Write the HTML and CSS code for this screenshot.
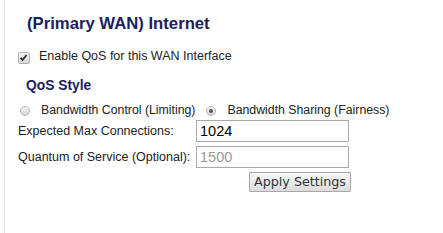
FILE: index.html
```html
<!DOCTYPE html>
<html>
<head>
<meta charset="utf-8">
<link rel="stylesheet" href="styles.css">
</head>
<body>
<div class="panel">
  <h2 class="title">(Primary WAN) Internet</h2>
  <div class="check-row">
    <span class="checkbox"><svg viewBox="0 0 11 11" width="11" height="11"><path d="M2.5 5.8 L4.6 7.9 L8.6 3" fill="none" stroke="#333" stroke-width="1.8"/></svg></span>
    <span class="lbl">Enable QoS for this WAN Interface</span>
  </div>
  <h3 class="subtitle">QoS Style</h3>
  <div class="radio-row">
    <span class="radio"></span>
    <span class="lbl">Bandwidth Control (Limiting)</span>
    <span class="radio checked"></span>
    <span class="lbl">Bandwidth Sharing (Fairness)</span>
  </div>
  <div class="form">
    <label class="flabel">Expected Max Connections:</label>
    <input class="finput" type="text" value="1024">
    <label class="flabel">Quantum of Service (Optional):</label>
    <input class="finput" type="text" placeholder="1500">
    <button class="btn">Apply Settings</button>
  </div>
</div>
</body>
</html>
```
FILE: styles.css
```css
html, body {
  margin: 0;
  padding: 0;
  background: #fff;
}
body {
  font-family: "Liberation Sans", Arial, sans-serif;
  color: #222;
  width: 443px;
  height: 233px;
  overflow: hidden;
}
.panel {
  margin-left: 4px;
  border-left: 1px solid #e2e2e2;
  height: 233px;
  padding-left: 13px;
  box-sizing: border-box;
}
.title {
  margin: 0 0 0 9px;
  padding-top: 14px;
  font-size: 16.7px;
  line-height: 20px;
  font-weight: bold;
  color: #1b215e;
}
.check-row {
  margin-top: 14px;
  display: flex;
  align-items: center;
  height: 16px;
  font-size: 12.5px;
  line-height: 16px;
}
.checkbox {
  width: 10px;
  height: 10px;
  border: 1px solid #b4b4b4;
  border-radius: 2px;
  background: linear-gradient(#f2f2f2, #d8d8d8);
  margin-right: 9px;
  margin-top: 3px;
  position: relative;
}
.checkbox svg {
  position: absolute;
  left: -1px;
  top: -1px;
}
.subtitle {
  margin: 13px 0 0 8px;
  font-size: 13.8px;
  line-height: 17px;
  font-weight: bold;
  color: #1b215e;
}
.radio-row {
  margin-top: 8px;
  display: flex;
  align-items: center;
  height: 16px;
  font-size: 12.3px;
  line-height: 16px;
  padding-left: 2px;
}
.radio {
  width: 8px;
  height: 8px;
  border: 1px solid #b8b8b8;
  border-radius: 50%;
  background: linear-gradient(#f4f4f4, #d6d6d6);
  margin-right: 11px;
  margin-top: 2px;
  position: relative;
}
.radio.checked::after {
  content: "";
  position: absolute;
  left: 2px;
  top: 2px;
  width: 4px;
  height: 4px;
  border-radius: 50%;
  background: #555;
}
.radio-row .lbl:nth-of-type(2) {
  margin-right: 11px;
}
.form {
  margin-top: 2px;
  display: grid;
  grid-template-columns: 178px 155px;
  row-gap: 4px;
  width: 333px;
}
.flabel {
  font-size: 12.5px;
  line-height: 22px;
  height: 22px;
  white-space: nowrap;
}
.finput {
  width: 153px;
  height: 22px;
  box-sizing: border-box;
  border: 1px solid #a9a9a9;
  padding: 0 3px;
  margin: 0;
  font-family: "Liberation Sans", Arial, sans-serif;
  font-size: 14.5px;
  color: #000;
  background: #fff;
  outline: none;
}
.finput::placeholder {
  color: #9a9a9a;
}
.btn {
  grid-column: 2;
  justify-self: end;
  width: 102px;
  height: 20px;
  margin: 0;
  padding: 0;
  border: 1px solid #a8a8a8;
  border-radius: 1px;
  background: linear-gradient(#f8f8f8, #dcdcdc);
  font-family: "DejaVu Sans", Verdana, sans-serif;
  font-size: 12.7px;
  color: #333;
  line-height: 18px;
}
```
